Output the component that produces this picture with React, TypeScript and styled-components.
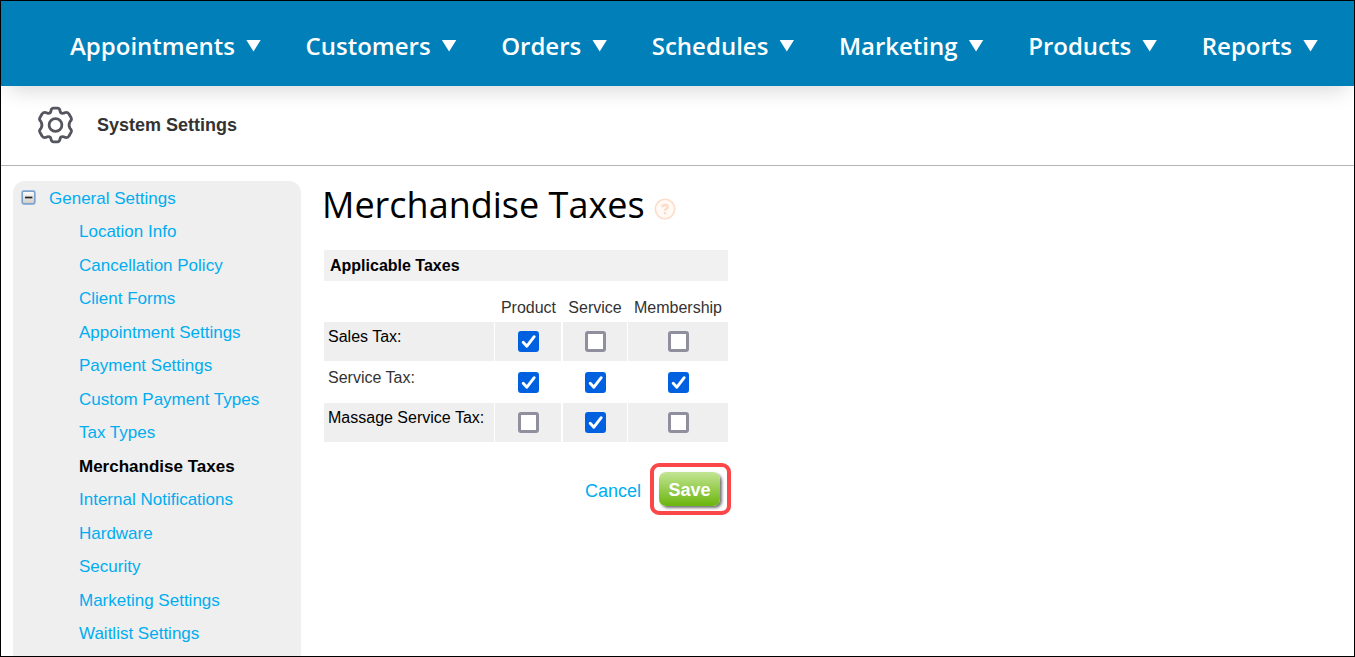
import React, { useState } from "react";
import styled, { createGlobalStyle, css } from "styled-components";

const GlobalStyle = createGlobalStyle`
  *, *::before, *::after { box-sizing: border-box; }
  body {
    margin: 0;
    background: #fff;
    color: #333;
    font-family: "Liberation Sans", Arial, sans-serif;
    font-size: 17px;
    line-height: 20px;
  }
  a { color: #00adef; text-decoration: none; }
`;

const Page = styled.div`
  display: flex;
  flex-direction: column;
  min-height: 100vh;
  border: 1px solid #000;
`;

const TopNav = styled.nav`
  display: flex;
  align-items: center;
  justify-content: space-between;
  height: 85px;
  padding: 4px 36px 0 69px;
  background: #007fb8;
  box-shadow: 0 12px 20px -8px rgba(0, 0, 0, 0.16);
`;

const NavButton = styled.button`
  display: flex;
  align-items: center;
  gap: 11px;
  padding: 0;
  border: 0;
  background: none;
  color: #fff;
  font: 600 24px/32px "Open Sans", sans-serif;
  white-space: nowrap;
  cursor: pointer;
`;

const Caret = styled.span`
  width: 15px;
  height: 12px;
  background: #fff;
  clip-path: polygon(0 0, 100% 0, 50% 100%);
`;

const SectionBar = styled.header`
  display: flex;
  align-items: center;
  gap: 23px;
  height: 80px;
  padding: 0 36px 2px;
  border-bottom: 1px solid #b5b5b5;
`;

const SectionName = styled.div`
  font-size: 18px;
  font-weight: bold;
`;

const Body = styled.div`
  display: flex;
  flex: 1;
  gap: 21px;
  padding: 15px 12px 0;
`;

const Sidebar = styled.aside`
  flex: 0 0 288px;
  padding: 0 8px 4px;
  border-radius: 12px 12px 0 0;
  background: #efefef;
`;

const Group = styled.div`
  display: flex;
  gap: 13px;
  height: 34px;
  line-height: 36px;
`;

const Toggle = styled.button`
  display: flex;
  padding: 9px 0 0;
  border: 0;
  background: none;
  cursor: pointer;
`;

const Links = styled.ul`
  margin: 0;
  padding: 0 0 0 58px;
  list-style: none;
`;

const LinkRow = styled.li`
  height: 34px;
  line-height: 34px;
  &:nth-child(even) { height: 33px; }
`;

const SideLink = styled.a<{ $current?: boolean }>`
  ${(p) => p.$current && "color: #000; font-weight: bold;"}
`;

const Main = styled.main`
  flex: 1;
  min-width: 0;
`;

const TitleRow = styled.div`
  display: flex;
  align-items: center;
  gap: 9px;
  height: 48px;
`;

const Title = styled.h1`
  margin: 0;
  color: #000;
  font: 400 36px/48px "Open Sans", sans-serif;
`;

const HelpButton = styled.button`
  display: flex;
  padding: 8px 0 0;
  border: 0;
  background: none;
  cursor: pointer;
`;

const Form = styled.form`
  width: 404px;
  margin: 21px 0 0 2px;
`;

const FormHeading = styled.h2`
  margin: 0 0 17px;
  padding: 0 6px;
  background: #f1f1f1;
  color: #000;
  font-size: 16px;
  line-height: 31px;
`;

const TaxTable = styled.table`
  width: 100%;
  table-layout: fixed;
  border-collapse: separate;
  border-spacing: 0;
  font-size: 16px;
  white-space: nowrap;
`;

const Column = styled.col<{ $width: number }>`
  width: ${(p) => p.$width}px;
`;

const kindCell = css`
  padding: 0;
  border-left: 1px solid #fff;
  &:nth-child(2) { padding-left: 1px; }
  &:nth-child(3) { border-left-width: 2px; }
`;

const ColumnHead = styled.th`
  ${kindCell}
  height: 24px;
  font-weight: normal;
  line-height: 20px;
  vertical-align: top;
`;

const TaxRow = styled.tr<{ $shaded: boolean; $gap: number }>`
  background: ${(p) => (p.$shaded ? "#efefef" : "#fff")};
  color: ${(p) => (p.$shaded ? "#000" : "#333")};
  & > * {
    height: ${(p) => 39 + p.$gap}px;
    border-top: ${(p) => p.$gap}px solid #fff;
  }
`;

const RowHead = styled.th`
  padding: 5px 4px;
  font-weight: normal;
  text-align: left;
  vertical-align: top;
`;

const CheckCell = styled.td`
  ${kindCell}
`;

const CheckBox = styled.span`
  display: grid;
  place-content: center;
  & > * { grid-area: 1 / 1; }
  svg { pointer-events: none; }
`;

const CheckInput = styled.input`
  appearance: none;
  width: 21px;
  height: 21px;
  margin: 0;
  border: 3px solid #8f8f9d;
  border-radius: 3px;
  background: #fff;
  &:checked { border-color: #0061e0; background: #0061e0; }
`;

const Actions = styled.div`
  display: flex;
  justify-content: flex-end;
  align-items: center;
  gap: 9px;
  margin: 21px -3px 0 0;
  font-size: 18px;
`;

const CancelLink = styled.a`
  padding-top: 3px;
`;

const Highlight = styled.div`
  padding: 5px 7px 5px 5px;
  border: 4px solid #fb4747;
  border-radius: 9px;
`;

const SaveButton = styled.button`
  display: block;
  width: 61px;
  height: 34px;
  padding: 0;
  border: 0;
  border-radius: 7px;
  background: linear-gradient(#c3e594, #6bb50d);
  box-shadow: 2px 2px 3px rgba(0, 0, 0, 0.55);
  color: #fff;
  font: bold 18px/36px "Liberation Sans", Arial, sans-serif;
  cursor: pointer;
`;

const GearIcon = () => (
  <svg width="37" height="38" viewBox="0 0 37 38" fill="none" stroke="#555560" strokeWidth="2.8" strokeLinejoin="round" aria-hidden="true">
    <circle cx="18.5" cy="19" r="6.4" />
    <path d="M13.9 5.3 Q14.2 2.4 16.2 2.2 H20.8 Q22.8 2.4 23.1 5.3 Q23.5 7.4 25.5 7.4 Q26.7 7.4 28.4 6.5 Q30.5 6 32 8 L34.3 12.2 Q35 13.8 32.9 15.8 Q31.2 19 32.9 22.2 Q35 24.2 34.3 25.8 L32 30 Q30.5 32 28.4 31.5 Q26.7 30.6 25.5 30.6 Q23.5 30.6 23.1 32.7 Q22.8 35.6 20.8 35.8 H16.2 Q14.2 35.6 13.9 32.7 Q13.5 30.6 11.5 30.6 Q10.3 30.6 8.6 31.5 Q6.5 32 5 30 L2.7 25.8 Q2 24.2 4.1 22.2 Q5.8 19 4.1 15.8 Q2 13.8 2.7 12.2 L5 8 Q6.5 6 8.6 6.5 Q10.3 7.4 11.5 7.4 Q13.5 7.4 13.9 5.3 Z" />
  </svg>
);

const MinusIcon = () => (
  <svg width="15" height="15" viewBox="0 0 15 15" aria-hidden="true">
    <defs>
      <linearGradient id="toggle-fill" x1="0" y1="0" x2="0" y2="1">
        <stop offset="0" stopColor="#fff" />
        <stop offset="1" stopColor="#d0cbc2" />
      </linearGradient>
    </defs>
    <rect x="1.2" y="1.2" width="12.6" height="12.6" rx="1.5" fill="url(#toggle-fill)" stroke="#7ba3cf" strokeWidth="1.7" />
    <path d="M4 7.5h7.4" stroke="#222" strokeWidth="1.7" />
  </svg>
);

const HelpIcon = () => (
  <svg width="22" height="22" viewBox="0 0 22 22" fill="none" stroke="#fddcc9" aria-hidden="true">
    <circle cx="11" cy="11" r="9.7" fill="#fffaf6" strokeWidth="1.6" />
    <path d="M8.3 9.2 Q8.3 6.9 11 6.9 Q13.7 6.9 13.7 9 Q13.7 10.3 12.1 11 Q11.1 11.5 11.1 12.8" strokeWidth="2.6" />
    <path d="M11.1 14v2.4" strokeWidth="2.6" />
  </svg>
);

const CheckMark = () => (
  <svg width="21" height="21" viewBox="0 0 21 21" fill="none" stroke="#fff" strokeWidth="2.9" strokeLinecap="round" strokeLinejoin="round" aria-hidden="true">
    <path d="M5.2 11.2 L8.9 15.2 L16.2 5.7" />
  </svg>
);

const menus = ["Appointments", "Customers", "Orders", "Schedules", "Marketing", "Products", "Reports"];

const settings = [
  "Location Info",
  "Cancellation Policy",
  "Client Forms",
  "Appointment Settings",
  "Payment Settings",
  "Custom Payment Types",
  "Tax Types",
  "Merchandise Taxes",
  "Internal Notifications",
  "Hardware",
  "Security",
  "Marketing Settings",
  "Waitlist Settings",
];

const kinds = ["Product", "Service", "Membership"];
const taxes = [
  { name: "Sales Tax", applies: [true, false, false] },
  { name: "Service Tax", applies: [true, true, true] },
  { name: "Massage Service Tax", applies: [false, true, false] },
];

function TaxCheck({ label, initial }: { label: string; initial: boolean }) {
  const [on, setOn] = useState(initial);
  return (
    <CheckBox>
      <CheckInput type="checkbox" aria-label={label} checked={on} onChange={() => setOn(!on)} />
      {on && <CheckMark />}
    </CheckBox>
  );
}

export default function App() {
  const [open, setOpen] = useState(true);
  return (
    <>
      <GlobalStyle />
      <Page>
        <TopNav>
          {menus.map((m) => (
            <NavButton key={m} type="button">
              {m}
              <Caret />
            </NavButton>
          ))}
        </TopNav>
        <SectionBar>
          <GearIcon />
          <SectionName>System Settings</SectionName>
        </SectionBar>
        <Body>
          <Sidebar>
            <Group>
              <Toggle type="button" aria-label="Toggle General Settings" aria-expanded={open} onClick={() => setOpen(!open)}>
                <MinusIcon />
              </Toggle>
              <a href="#general">General Settings</a>
            </Group>
            {open && (
              <Links>
                {settings.map((s) => (
                  <LinkRow key={s}>
                    <SideLink href="#settings" $current={s === "Merchandise Taxes"}>
                      {s}
                    </SideLink>
                  </LinkRow>
                ))}
              </Links>
            )}
          </Sidebar>
          <Main>
            <TitleRow>
              <Title>Merchandise Taxes</Title>
              <HelpButton type="button" aria-label="Help">
                <HelpIcon />
              </HelpButton>
            </TitleRow>
            <Form onSubmit={(e) => e.preventDefault()}>
              <FormHeading>Applicable Taxes</FormHeading>
              <TaxTable>
                <colgroup>
                  <Column $width={170} />
                  <Column $width={67} />
                  <Column $width={66} />
                  <Column $width={101} />
                </colgroup>
                <thead>
                  <tr>
                    <ColumnHead as="td" />
                    {kinds.map((k) => (
                      <ColumnHead key={k} scope="col">{k}</ColumnHead>
                    ))}
                  </tr>
                </thead>
                <tbody>
                  {taxes.map((t, i) => (
                    <TaxRow key={t.name} $shaded={i % 2 === 0} $gap={i === 0 ? 0 : i % 2 === 0 ? 1 : 2}>
                      <RowHead scope="row">{t.name}:</RowHead>
                      {t.applies.map((on, k) => (
                        <CheckCell key={kinds[k]}>
                          <TaxCheck label={`${t.name}, ${kinds[k]}`} initial={on} />
                        </CheckCell>
                      ))}
                    </TaxRow>
                  ))}
                </tbody>
              </TaxTable>
              <Actions>
                <CancelLink href="#cancel">Cancel</CancelLink>
                <Highlight>
                  <SaveButton type="submit">Save</SaveButton>
                </Highlight>
              </Actions>
            </Form>
          </Main>
        </Body>
      </Page>
    </>
  );
}
